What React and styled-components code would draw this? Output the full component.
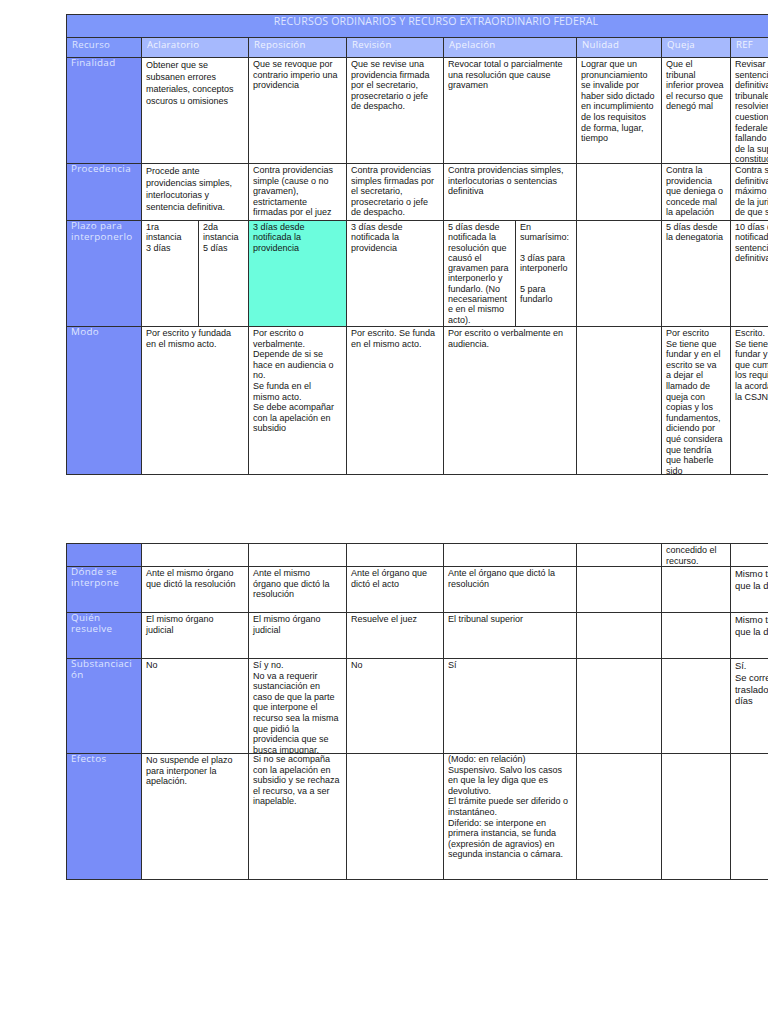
import React from 'react';
import styled, { createGlobalStyle } from 'styled-components';

const COLORS = {
  title: '#7e97fa',
  label: '#798df8',
  head: '#a6b9fd',
  mint: '#6cfddd',
  line: '#2e2e2e',
  ink: '#151515',
  labelInk: '#dfe5ff',
  headInk: '#eef2ff',
};

const COLS = '75px 57px 50px 98px 97px 72px 61px 85px 69px 75px';

const GlobalStyle = createGlobalStyle`
  html, body {
    margin: 0;
    padding: 0;
    background: #ffffff;
    overflow: hidden;
  }
  body {
    width: 768px;
    height: 1024px;
  }
`;

const Page = styled.div`
  padding: 14px 0 0 66px;
  display: flex;
  flex-direction: column;
  gap: 68px;
  width: 900px;
`;

const Sheet = styled.div`
  display: grid;
  grid-template-columns: ${COLS};
  grid-template-rows: ${(p) => p.$rows};
  width: max-content;
  border-top: 1px solid ${COLORS.line};
  border-left: 1px solid ${COLORS.line};
`;

const Cell = styled.div`
  grid-column: span ${(p) => p.$span || 1};
  box-sizing: border-box;
  border-right: 1px solid ${COLORS.line};
  border-bottom: 1px solid ${COLORS.line};
  background: ${(p) => p.$bg || '#ffffff'};
  padding: ${(p) => p.$pt ?? 1}px 3px 0 4px;
  overflow: hidden;
  white-space: pre;
  font-family: 'Liberation Sans', Arial, sans-serif;
  font-size: ${(p) => p.$fs || 9}px;
  line-height: ${(p) => p.$lh || 10.6}px;
  color: ${COLORS.ink};
`;

const TitleCell = styled.div`
  grid-column: 1 / -1;
  background: ${COLORS.title};
  border-right: 1px solid ${COLORS.line};
  border-bottom: 1px solid ${COLORS.line};
  padding-top: 0;
  text-align: center;
  font-family: 'Open Sans', 'Noto Sans', sans-serif;
  font-size: 10.6px;
  line-height: 13px;
  letter-spacing: 0.15px;
  color: ${COLORS.labelInk};
  white-space: nowrap;
`;

const HeadCell = styled.div`
  grid-column: span ${(p) => p.$span || 1};
  background: ${(p) => (p.$dark ? COLORS.title : COLORS.head)};
  border-right: 1px solid ${COLORS.line};
  border-bottom: 1px solid ${COLORS.line};
  padding: 1px 4px 0 5px;
  font-family: 'Open Sans', 'Noto Sans', sans-serif;
  font-size: 9.6px;
  line-height: 12px;
  letter-spacing: 0.3px;
  color: ${(p) => (p.$dark ? COLORS.labelInk : COLORS.headInk)};
  white-space: nowrap;
`;

const LabelCell = styled.div`
  background: ${COLORS.label};
  border-right: 1px solid ${COLORS.line};
  border-bottom: 1px solid ${COLORS.line};
  padding: 0 2px 0 4px;
  font-family: 'Open Sans', 'Noto Sans', sans-serif;
  font-size: 9.8px;
  line-height: 10.6px;
  letter-spacing: 0.35px;
  color: ${COLORS.labelInk};
  white-space: pre;
`;

const HEADERS = [
  { text: 'Aclaratorio', span: 2 },
  { text: 'Reposición' },
  { text: 'Revisión' },
  { text: 'Apelación', span: 2 },
  { text: 'Nulidad' },
  { text: 'Queja' },
  { text: 'REF' },
];

const FIRST_ROWS = [
  {
    label: 'Finalidad',
    cells: [
      { text: 'Obtener que se\nsubsanen errores\nmateriales, conceptos\noscuros u omisiones', span: 2, lh: 12 },
      { text: 'Que se revoque por\ncontrario imperio una\nprovidencia' },
      { text: 'Que se revise una\nprovidencia firmada\npor el secretario,\nprosecretario o jefe\nde despacho.' },
      { text: 'Revocar total o parcialmente\nuna resolución que cause\ngravamen', span: 2 },
      { text: 'Lograr que un\npronunciamiento\nse invalide por\nhaber sido dictado\nen incumplimiento\nde los requisitos\nde forma, lugar,\ntiempo' },
      { text: 'Que el\ntribunal\ninferior provea\nel recurso que\ndenegó mal' },
      { text: 'Revisar las\nsentencias\ndefinitivas de\ntribunales\nresolviendo\ncuestiones\nfederales\nfallando en contra\nde la supremacía\nconstitucional' },
    ],
  },
  {
    label: 'Procedencia',
    cells: [
      { text: 'Procede ante\nprovidencias simples,\ninterlocutorias y\nsentencia definitiva.', span: 2, lh: 12 },
      { text: 'Contra providencias\nsimple (cause o no\ngravamen),\nestrictamente\nfirmadas por el juez' },
      { text: 'Contra providencias\nsimples firmadas por\nel secretario,\nprosecretario o jefe\nde despacho.' },
      { text: 'Contra providencias simples,\ninterlocutorias o sentencias\ndefinitiva', span: 2 },
      { text: '' },
      { text: 'Contra la\nprovidencia\nque deniega o\nconcede mal\nla apelación' },
      { text: 'Contra sentencias\ndefinitivas del\nmáximo tribunal\nde la jurisdicción\nde que se trate' },
    ],
  },
  {
    label: 'Plazo para\ninterponerlo',
    cells: [
      { text: '1ra\ninstancia\n3 días', lh: 10.3 },
      { text: '2da\ninstancia\n5 días', lh: 10.3 },
      { text: '3 días desde\nnotificada la\nprovidencia', bg: COLORS.mint, lh: 10.3 },
      { text: '3 días desde\nnotificada la\nprovidencia', lh: 10.3 },
      { text: '5 días desde\nnotificada la\nresolución que\ncausó el\ngravamen para\ninterponerlo y\nfundarlo. (No\nnecesariament\ne en el mismo\nacto).', lh: 10.3 },
      { text: 'En\nsumarísimo:\n\n3 días para\ninterponerlo\n\n5 para\nfundarlo', lh: 10.3 },
      { text: '' },
      { text: '5 días desde\nla denegatoria', lh: 10.3 },
      { text: '10 días desde\nnotificada la\nsentencia\ndefinitiva', lh: 10.3 },
    ],
  },
  {
    label: 'Modo',
    cells: [
      { text: 'Por escrito y fundada\nen el mismo acto.', span: 2 },
      { text: 'Por escrito o\nverbalmente.\nDepende de si se\nhace en audiencia o\nno.\nSe funda en el\nmismo acto.\nSe debe acompañar\ncon la apelación en\nsubsidio' },
      { text: 'Por escrito. Se funda\nen el mismo acto.' },
      { text: 'Por escrito o verbalmente en\naudiencia.', span: 2 },
      { text: '' },
      { text: 'Por escrito\nSe tiene que\nfundar y en el\nescrito se va\na dejar el\nllamado de\nqueja con\ncopias y los\nfundamentos,\ndiciendo por\nqué considera\nque tendría\nque haberle\nsido' },
      { text: 'Escrito.\nSe tiene que\nfundar y\nque cumplir\nlos requisitos de\nla acordada de\nla CSJN' },
    ],
  },
];

const SECOND_ROWS = [
  {
    label: '',
    cells: [
      { text: '', span: 2 },
      { text: '' },
      { text: '' },
      { text: '', span: 2 },
      { text: '' },
      { text: 'concedido el\nrecurso.' },
      { text: '' },
    ],
  },
  {
    label: 'Dónde se\ninterpone',
    cells: [
      { text: 'Ante el mismo órgano\nque dictó la resolución', span: 2 },
      { text: 'Ante el mismo\nórgano que dictó la\nresolución' },
      { text: 'Ante el órgano que\ndictó el acto' },
      { text: 'Ante el órgano que dictó la\nresolución', span: 2 },
      { text: '' },
      { text: '' },
      { text: 'Mismo tribunal\nque la dictó', lh: 11.8, fs: 9.4 },
    ],
  },
  {
    label: 'Quién\nresuelve',
    cells: [
      { text: 'El mismo órgano\njudicial', span: 2 },
      { text: 'El mismo órgano\njudicial' },
      { text: 'Resuelve el juez' },
      { text: 'El tribunal superior', span: 2 },
      { text: '' },
      { text: '' },
      { text: 'Mismo tribunal\nque la dictó', lh: 11.8, fs: 9.4 },
    ],
  },
  {
    label: 'Substanciaci\nón',
    cells: [
      { text: 'No', span: 2 },
      { text: 'Sí y no.\nNo va a requerir\nsustanciación en\ncaso de que la parte\nque interpone el\nrecurso sea la misma\nque pidió la\nprovidencia que se\nbusca impugnar.' },
      { text: 'No' },
      { text: 'Sí', span: 2 },
      { text: '' },
      { text: '' },
      { text: 'Sí.\nSe corre\ntraslado por 10\ndías', lh: 11.8, fs: 9.4 },
    ],
  },
  {
    label: 'Efectos',
    cells: [
      { text: 'No suspende el plazo\npara interponer la\napelación.', span: 2 },
      { text: 'Si no se acompaña\ncon la apelación en\nsubsidio y se rechaza\nel recurso, va a ser\ninapelable.', pt: 0 },
      { text: '' },
      { text: '(Modo: en relación)\nSuspensivo. Salvo los casos\nen que la ley diga que es\ndevolutivo.\nEl trámite puede ser diferido o\ninstantáneo.\nDiferido: se interpone en\nprimera instancia, se funda\n(expresión de agravios) en\nsegunda instancia o cámara.', span: 2, pt: 0 },
      { text: '' },
      { text: '' },
      { text: '' },
    ],
  },
];

const SheetRows = ({ rows }) =>
  rows.map((row, i) => (
    <React.Fragment key={i}>
      <LabelCell>{row.label}</LabelCell>
      {row.cells.map((c, j) => (
        <Cell key={j} $span={c.span} $bg={c.bg} $lh={c.lh} $fs={c.fs} $pt={c.pt}>
          {c.text}
        </Cell>
      ))}
    </React.Fragment>
  ));

export default function App() {
  return (
    <>
      <GlobalStyle />
      <Page>
        <Sheet $rows="23px 20px 106px 57px 106px 148px">
          <TitleCell>RECURSOS ORDINARIOS Y RECURSO EXTRAORDINARIO FEDERAL</TitleCell>
          <HeadCell $dark>Recurso</HeadCell>
          {HEADERS.map((h) => (
            <HeadCell key={h.text} $span={h.span}>{h.text}</HeadCell>
          ))}
          <SheetRows rows={FIRST_ROWS} />
        </Sheet>

        <Sheet $rows="23px 46px 46px 95px 126px">
          <SheetRows rows={SECOND_ROWS} />
        </Sheet>
      </Page>
    </>
  );
}
